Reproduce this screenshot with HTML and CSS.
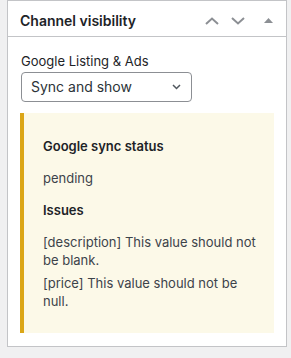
FILE: index.html
```html
<!DOCTYPE html>
<html lang="en">
<head>
<meta charset="utf-8">
<title>Channel visibility</title>
<link rel="stylesheet" href="styles.css">
</head>
<body>
<div class="postbox">
  <div class="postbox-header">
    <h2 class="hndle">Channel visibility</h2>
    <div class="handle-actions">
      <button class="handle-order" type="button" aria-label="Move up">
        <svg width="14" height="8" viewBox="0 0 14 8"><polyline points="1,7 7,1.5 13,7" fill="none" stroke="currentColor" stroke-width="2"/></svg>
      </button>
      <button class="handle-order" type="button" aria-label="Move down">
        <svg width="14" height="8" viewBox="0 0 14 8"><polyline points="1,1 7,6.5 13,1" fill="none" stroke="currentColor" stroke-width="2"/></svg>
      </button>
      <button class="handlediv" type="button" aria-label="Toggle panel">
        <svg width="9" height="5" viewBox="0 0 9 5"><polygon points="0,5 4.5,0 9,5" fill="currentColor"/></svg>
      </button>
    </div>
  </div>
  <div class="inside">
    <label class="field-label">Google Listing &amp; Ads</label>
    <div class="select">
      <span class="select-value">Sync and show</span>
      <svg class="select-arrow" width="9" height="6" viewBox="0 0 9 6"><polyline points="1,1 4.5,4.5 8,1" fill="none" stroke="currentColor" stroke-width="1.5"/></svg>
    </div>
    <div class="notice">
      <p class="notice-title">Google sync status</p>
      <p class="notice-text">pending</p>
      <p class="notice-title">Issues</p>
      <ul class="issues">
        <li>[description] This value should not be blank.</li>
        <li>[price] This value should not be null.</li>
      </ul>
    </div>
  </div>
</div>
</body>
</html>
```

FILE: styles.css
```css
html, body {
  margin: 0;
  padding: 0;
  background: #f0f0f1;
}
body {
  padding: 0 4px 0 7px;
  font-family: Inter, "Liberation Sans", sans-serif;
  font-size: 13px;
  line-height: 18px;
  color: #3c434a;
}
.postbox {
  background: #fff;
  border: 1px solid #c3c4c7;
  box-sizing: border-box;
  height: 347px;
}
.postbox-header {
  display: flex;
  align-items: center;
  justify-content: space-between;
  height: 36px;
  padding-top: 4px;
  box-sizing: border-box;
  border-bottom: 1px solid #c3c4c7;
}
.hndle {
  margin: 0;
  padding-left: 12px;
  font-size: 14px;
  font-weight: 600;
  line-height: 20px;
  color: #1d2327;
}
.handle-actions {
  display: flex;
  align-items: center;
  height: 100%;
}
.handle-order, .handlediv {
  display: flex;
  align-items: center;
  justify-content: center;
  height: 31px;
  padding: 0;
  border: 0;
  background: none;
  color: #8c8f94;
}
.handle-order { width: 26px; }
.handlediv { width: 35px; }
.inside {
  padding: 15px 12px 12px;
}
.field-label {
  display: block;
  padding-left: 1px;
  color: #1d2327;
}
.select {
  display: flex;
  align-items: center;
  justify-content: space-between;
  width: 171px;
  height: 30px;
  margin: 2px 0 0 1px;
  padding: 0 10px 0 9px;
  box-sizing: border-box;
  border: 1px solid #8c8f94;
  border-radius: 4px;
  font-size: 14px;
  color: #2c3338;
}
.select-arrow { color: #50575e; }
.notice {
  margin-top: 11px;
  padding: 24px 12px 23px 19px;
  background: #fcf9e8;
  border-left: 4px solid #dba617;
}
.notice p {
  margin: 0 0 14px;
}
.notice-title {
  font-weight: 600;
  color: #1d2327;
}
.issues {
  list-style: none;
  margin: 0;
  padding: 0;
  display: flex;
  flex-direction: column;
  gap: 5px;
}
```
